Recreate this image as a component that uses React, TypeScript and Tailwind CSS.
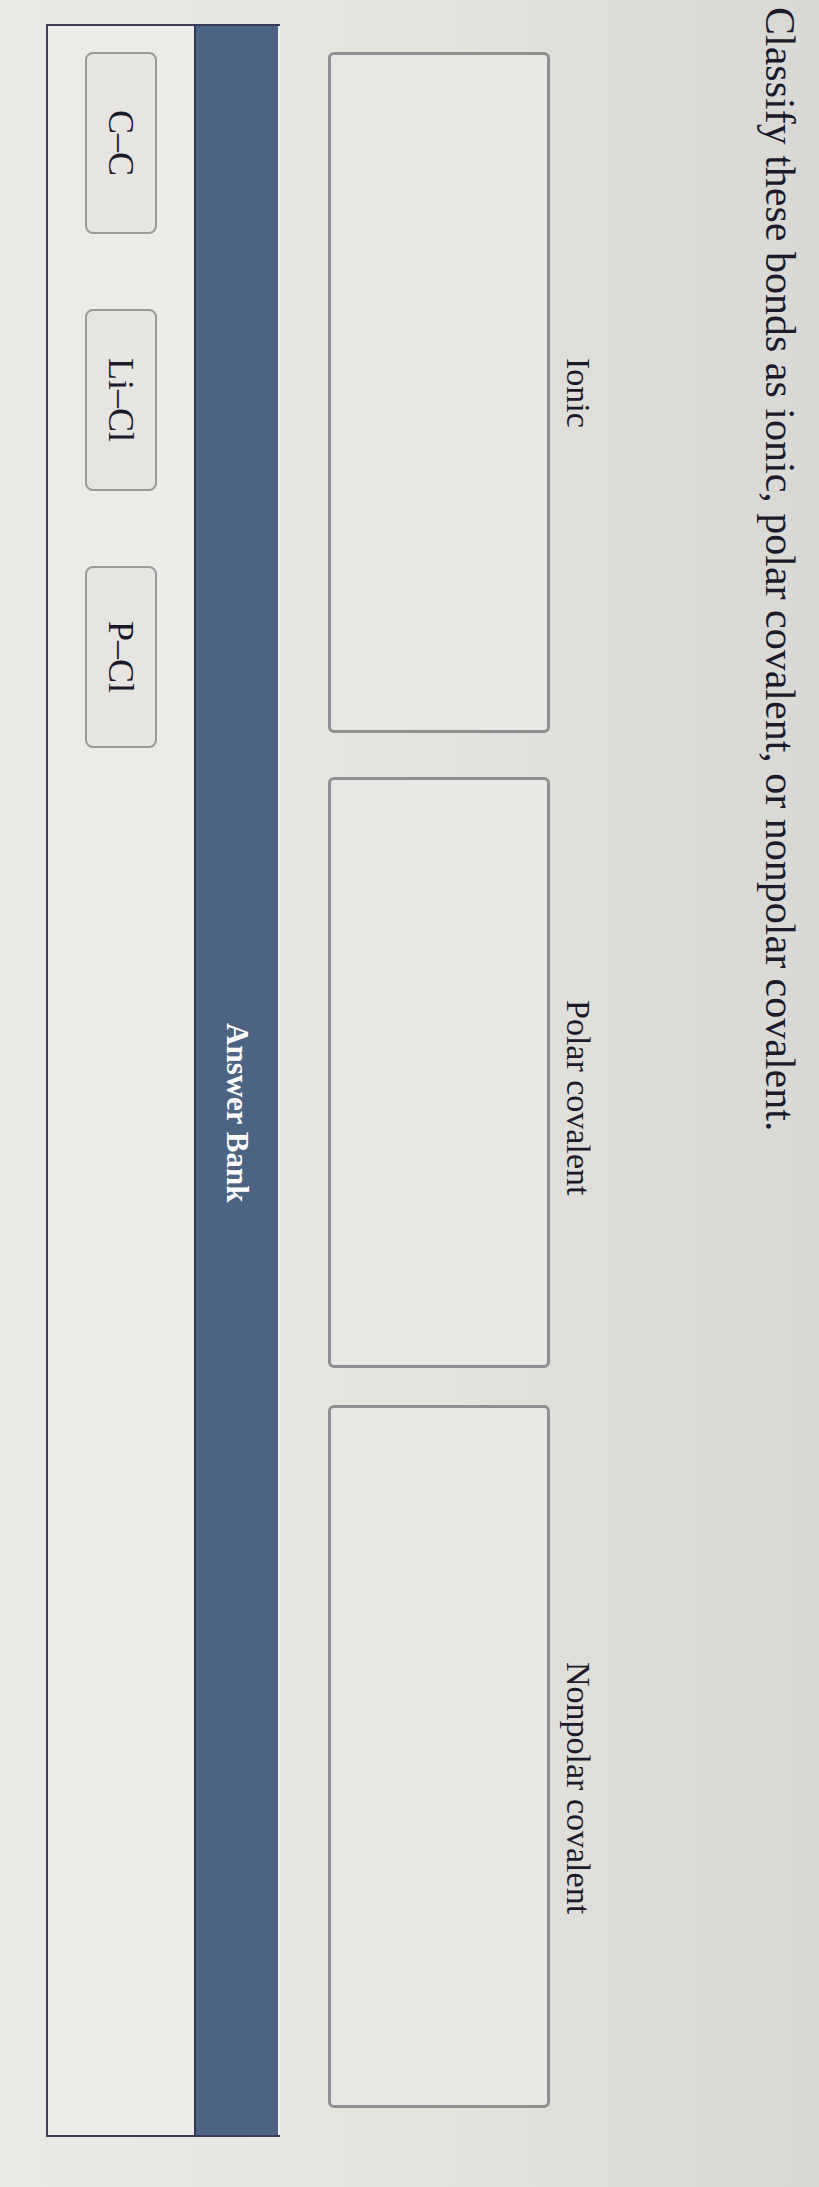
const tiles = ["C–C", "Li–Cl", "P–Cl"];

const bins = [
  { label: "Ionic", height: "h-[681px]", gap: "mb-[44px]", shift: "mt-0" },
  { label: "Polar covalent", height: "h-[591px]", gap: "mb-[37px]", shift: "mt-[50px]" },
  { label: "Nonpolar covalent", height: "h-[703px]", gap: "", shift: "mt-[64px]" },
];

export default function App() {
  return (
    <div className="flex h-[2187px] w-[819px] overflow-hidden bg-gradient-to-r from-[#eae9e4] via-[#e4e3de] to-[#d8d8d4] font-['Liberation_Serif','Times_New_Roman',serif] text-[#1d1a2c]">
      {/* Answer bank */}
      <div className="ml-[46px] mt-[24px] flex h-[2113px] w-[234px] shrink-0 border-y-2 border-l-2 border-[#3d3b5c]">
        <div className="flex flex-1 flex-col gap-[75px] bg-[#ecebe7] pl-[37px] pt-[26px]">
          {tiles.map((t) => (
            <div
              key={t}
              className="flex h-[182px] w-[72px] items-center justify-center rounded-[8px] border-2 border-[#9a989a] bg-[#e6e5e1]"
            >
              <span className="whitespace-nowrap text-[36px] leading-none [writing-mode:vertical-rl]">{t}</span>
            </div>
          ))}
        </div>
        <div className="flex w-[86px] items-center justify-center border-l-2 border-r-2 border-l-[#2c3a50] border-r-[#f3f3ef] bg-[#4c6383]">
          <span className="mt-[64px] whitespace-nowrap text-[31px] font-bold leading-none text-white [writing-mode:vertical-rl]">
            Answer Bank
          </span>
        </div>
      </div>

      {/* Bins with labels */}
      <div className="ml-[48px] flex shrink-0 flex-col pt-[52px]">
        {bins.map((b) => (
          <div key={b.label} className={`flex items-center ${b.gap}`}>
            <div className={`${b.height} w-[222px] rounded-[6px] border-[3px] border-[#908e91] bg-[#e8e7e3]`} />
            <span className={`${b.shift} ml-[11px] whitespace-nowrap text-[34px] leading-none [writing-mode:vertical-rl]`}>
              {b.label}
            </span>
          </div>
        ))}
      </div>

      {/* Question */}
      <div className="ml-[164px] shrink-0 pt-[7px]">
        <p className="whitespace-nowrap text-[42px] leading-none [writing-mode:vertical-rl]">
          Classify these bonds as ionic, polar covalent, or nonpolar covalent.
        </p>
      </div>
    </div>
  );
}
